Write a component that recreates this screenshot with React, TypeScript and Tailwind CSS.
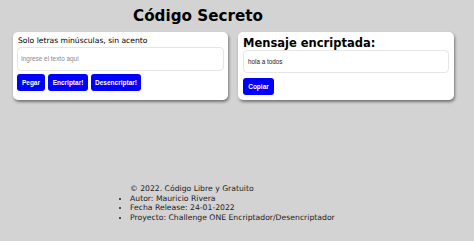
import React from "react";

export default function App() {
  return (
    <div className="w-[474px] h-[241px] bg-[#d3d3d3] overflow-hidden" style={{ fontFamily: '"DejaVu Sans", Verdana, sans-serif' }}>
      <h1 className="pl-[133px] pt-[7px] h-[32px] text-[15.2px] leading-[18px] font-bold text-black">Código Secreto</h1>
      <div className="flex items-stretch gap-[10px] pl-[13px]">
        <div className="w-[215px] h-[68px] bg-white rounded-[5px] shadow-[1px_2px_3px_rgba(0,0,0,0.45)] px-[4px] pt-[4px]">
          <p className="pl-[1px] text-[7.6px] leading-[10px] text-black">Solo letras minúsculas, sin acento</p>
          <div className="mt-[1px] h-[24px] border border-[#e6e6e6] rounded-[4px] px-[3px] flex items-center text-[6.4px] leading-[8px] text-[#8a8a8a]" style={{ fontFamily: '"Liberation Sans", Arial, sans-serif' }}>Ingrese el texto aqui</div>
          <div className="flex gap-[3px] mt-[3px]" style={{ fontFamily: '"Liberation Sans", Arial, sans-serif' }}>
            <button className="h-[17px] w-[28px] bg-[#0000ff] text-white text-[6.5px] leading-[8px] font-bold rounded-[3px]">Pegar</button>
            <button className="h-[17px] w-[40px] bg-[#0000ff] text-white text-[6.5px] leading-[8px] font-bold rounded-[3px]">Encriptar!</button>
            <button className="h-[17px] w-[50px] bg-[#0000ff] text-white text-[6.5px] leading-[8px] font-bold rounded-[3px]">Desencriptar!</button>
          </div>
        </div>
        <div className="w-[216px] h-[68px] bg-white rounded-[5px] shadow-[1px_2px_3px_rgba(0,0,0,0.45)] px-[5px] pt-[4px]">
          <p className="text-[11.5px] leading-[14px] font-bold text-black">Mensaje encriptada:</p>
          <div className="h-[23px] border border-[#e6e6e6] rounded-[4px] px-[4px] flex items-center text-[6.3px] leading-[8px] text-[#222]" style={{ fontFamily: '"Liberation Sans", Arial, sans-serif' }}>hola a todos</div>
          <div className="flex mt-[5px]" style={{ fontFamily: '"Liberation Sans", Arial, sans-serif' }}>
            <button className="h-[17px] w-[31px] bg-[#0000ff] text-white text-[6.5px] leading-[8px] font-bold rounded-[3px]">Copiar</button>
          </div>
        </div>
      </div>
      <div className="mt-[84px] pl-[130px] text-[7.7px] leading-[9.5px] text-[#222]">
        <p>© 2022. Código Libre y Gratuito</p>
        <ul className="list-disc" style={{ listStylePosition: "outside" }}>
          <li>Autor: Mauricio Rivera</li>
          <li>Fecha Release: 24-01-2022</li>
          <li>Proyecto: Challenge ONE Encriptador/Desencriptador</li>
        </ul>
      </div>
    </div>
  );
}
